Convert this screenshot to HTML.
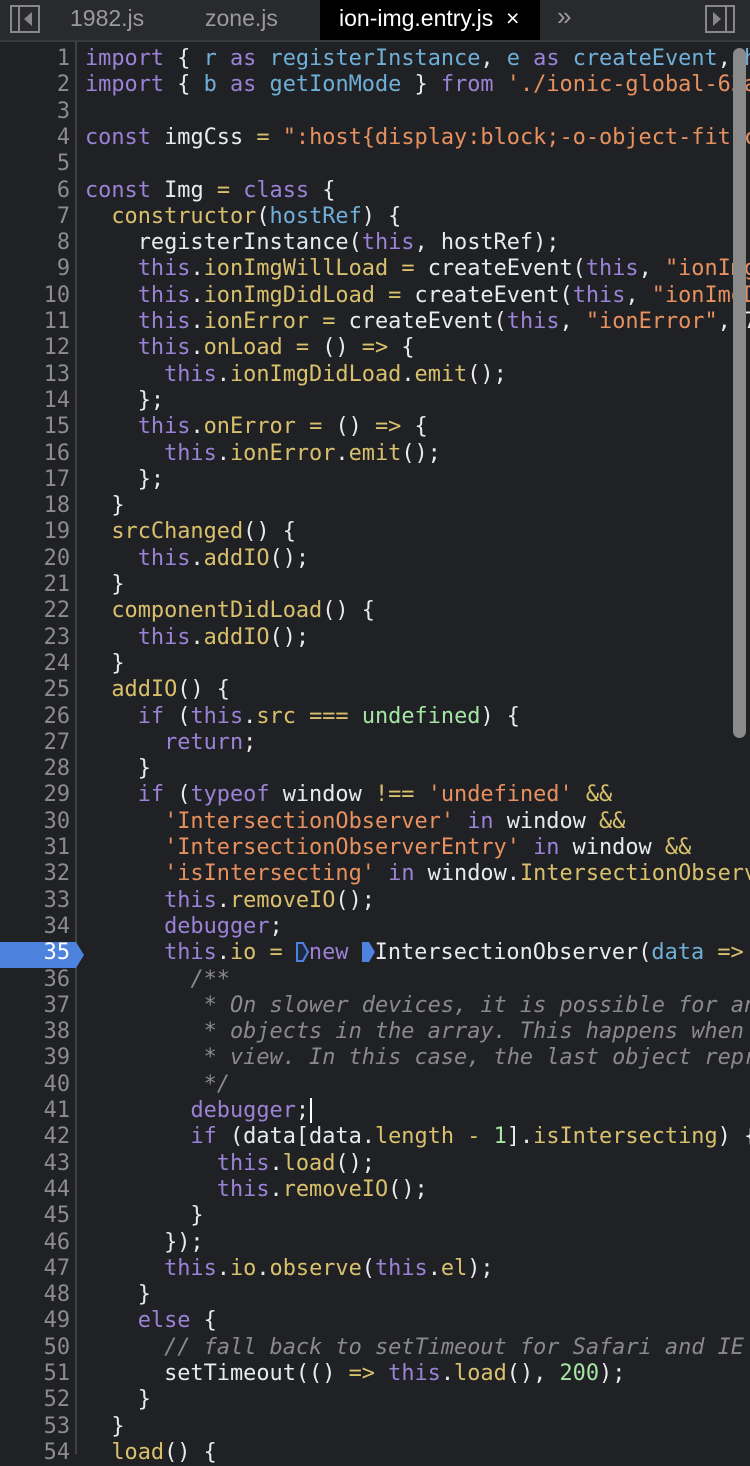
<!DOCTYPE html>
<html><head><meta charset="utf-8"><style>
html,body{margin:0;padding:0;background:#202124;width:750px;height:1454px;overflow:hidden}
.tabs{position:absolute;left:0;top:0;width:750px;height:40px;background:#292a2d;border-bottom:2px solid #3a3b3e;font-family:"Liberation Sans",sans-serif;font-size:23px;color:#9b9b9b}
.tabs span{position:absolute;top:5px;white-space:nowrap}
.act{position:absolute;left:320px;top:0;width:220px;height:40px;background:#000}
.code{position:absolute;left:0;top:46px;font-family:"DejaVu Sans Mono","Liberation Mono",monospace;font-size:21.9px;line-height:26.3px;color:#e8eaed}
.ln{position:absolute;left:0;width:70px;text-align:right;color:#8c8c8c}
.gut{position:absolute;left:75px;top:42px;width:2px;height:1412px;background:#3f4044}
.tx{position:absolute;left:85px;white-space:pre;width:665px;overflow:hidden}
.k{color:#9b82d6}.p{color:#d9c06c}.d{color:#6fb0d8}.s{color:#e8915f}.c{color:#8a8a8a;font-style:italic}.n{color:#a5e6a5}
.sb{position:absolute;left:733px;top:48px;width:13px;height:690px;border-radius:7px;background:#8a8a8a}
</style></head><body>
<div class="tabs">
<svg style="position:absolute;left:10px;top:5px" width="30" height="30"><rect x="1" y="1" width="28" height="26" fill="none" stroke="#888" stroke-width="2"/><line x1="9" y1="1" x2="9" y2="27" stroke="#888" stroke-width="2"/><path d="M22 7 L14 14 L22 21Z" fill="#888"/></svg>
<span style="left:70px">1982.js</span>
<span style="left:205px">zone.js</span>
<div class="act"></div>
<span style="left:339px;color:#fff">ion-img.entry.js&nbsp; ×</span>
<span style="left:557px;font-size:26px;top:1px">»</span>
<svg style="position:absolute;left:705px;top:5px" width="30" height="30"><rect x="1" y="1" width="28" height="26" fill="none" stroke="#888" stroke-width="2"/><line x1="21" y1="1" x2="21" y2="27" stroke="#888" stroke-width="2"/><path d="M8 7 L16 14 L8 21Z" fill="#888"/></svg>
</div>
<div class="gut"></div>
<svg style="position:absolute;left:0;top:942px" width="86" height="26"><path d="M0 0 H76 L84 13 L76 26 H0Z" fill="#4d82de"/></svg>
<div class="code" id="c"></div>
<div class="sb"></div>
<script>
var L=[
'<span class="k">import</span> { <span class="d">r</span> <span class="k">as</span> <span class="d">registerInstance</span>, <span class="d">e</span> <span class="k">as</span> <span class="d">createEvent</span>, <span class="d">h</span> <span class="k">as</span> <span class="d">Host</span>',
'<span class="k">import</span> { <span class="d">b</span> <span class="k">as</span> <span class="d">getIonMode</span> } <span class="k">from</span> <span class="s">\'./ionic-global-63a97a32.js\'</span>;',
'',
'<span class="k">const</span> imgCss <span class="p">=</span> <span class="s">":host{display:block;-o-object-fit:contain;object-fit:contain}"</span>',
'',
'<span class="k">const</span> Img <span class="p">=</span> <span class="k">class</span> {',
'  <span class="p">constructor</span>(<span class="d">hostRef</span>) {',
'    registerInstance(<span class="k">this</span>, hostRef);',
'    <span class="k">this</span>.<span class="p">ionImgWillLoad</span> <span class="p">=</span> createEvent(<span class="k">this</span>, <span class="s">"ionImgWillLoad"</span>, 7);',
'    <span class="k">this</span>.<span class="p">ionImgDidLoad</span> <span class="p">=</span> createEvent(<span class="k">this</span>, <span class="s">"ionImgDidLoad"</span>, 7);',
'    <span class="k">this</span>.<span class="p">ionError</span> <span class="p">=</span> createEvent(<span class="k">this</span>, <span class="s">"ionError"</span>, 7);',
'    <span class="k">this</span>.<span class="p">onLoad</span> <span class="p">=</span> () <span class="p">=&gt;</span> {',
'      <span class="k">this</span>.<span class="p">ionImgDidLoad</span>.<span class="p">emit</span>();',
'    };',
'    <span class="k">this</span>.<span class="p">onError</span> <span class="p">=</span> () <span class="p">=&gt;</span> {',
'      <span class="k">this</span>.<span class="p">ionError</span>.<span class="p">emit</span>();',
'    };',
'  }',
'  <span class="p">srcChanged</span>() {',
'    <span class="k">this</span>.<span class="p">addIO</span>();',
'  }',
'  <span class="p">componentDidLoad</span>() {',
'    <span class="k">this</span>.<span class="p">addIO</span>();',
'  }',
'  <span class="p">addIO</span>() {',
'    <span class="k">if</span> (<span class="k">this</span>.<span class="p">src</span> <span class="p">===</span> <span class="n">undefined</span>) {',
'      <span class="k">return</span>;',
'    }',
'    <span class="k">if</span> (<span class="k">typeof</span> window <span class="p">!==</span> <span class="s">\'undefined\'</span> <span class="p">&amp;&amp;</span>',
'      <span class="s">\'IntersectionObserver\'</span> <span class="k">in</span> window <span class="p">&amp;&amp;</span>',
'      <span class="s">\'IntersectionObserverEntry\'</span> <span class="k">in</span> window <span class="p">&amp;&amp;</span>',
'      <span class="s">\'isIntersecting\'</span> <span class="k">in</span> window.<span class="p">IntersectionObserverEntry</span>',
'      <span class="k">this</span>.<span class="p">removeIO</span>();',
'      <span class="k">debugger</span>;',
'      <span class="k">this</span>.<span class="p">io</span> <span class="p">=</span> <svg width="13" height="20" style="vertical-align:-3px"><path d="M1 1 H7 L12 10 L7 19 H1Z" fill="#1e2a44" stroke="#4d82de" stroke-width="2"/></svg><span class="k">new</span> <svg width="13" height="20" style="vertical-align:-3px"><path d="M0 0 H7 L13 10 L7 20 H0Z" fill="#4d82de"/></svg>IntersectionObserver(<span class="d">data</span> <span class="p">=&gt;</span> {',
'        <span class="c">/**</span>',
'<span class="c">         * On slower devices, it is possible for an intersection</span>',
'<span class="c">         * objects in the array. This happens when multiple</span>',
'<span class="c">         * view. In this case, the last object represents</span>',
'<span class="c">         */</span>',
'        <span class="k">debugger</span>;<span style="border-left:2px solid #fff;margin-left:1px"></span>',
'        <span class="k">if</span> (data[data.<span class="p">length</span> <span class="p">-</span> <span class="n">1</span>].<span class="p">isIntersecting</span>) {',
'          <span class="k">this</span>.<span class="p">load</span>();',
'          <span class="k">this</span>.<span class="p">removeIO</span>();',
'        }',
'      });',
'      <span class="k">this</span>.<span class="p">io</span>.<span class="p">observe</span>(<span class="k">this</span>.<span class="p">el</span>);',
'    }',
'    <span class="k">else</span> {',
'      <span class="c">// fall back to setTimeout for Safari and IE</span>',
'      setTimeout(() <span class="p">=&gt;</span> <span class="k">this</span>.<span class="p">load</span>(), <span class="n">200</span>);',
'    }',
'  }',
'  <span class="p">load</span>() {'
];
var h='';
for(var i=0;i<L.length;i++){var t=(i*26.3).toFixed(2);
h+='<div class="ln" style="top:'+t+'px'+(i==34?';color:#fff':'')+'">'+(i+1)+'</div><div class="tx" style="top:'+t+'px">'+L[i]+'</div>';}
document.getElementById('c').innerHTML=h;
</script>
</body></html>
